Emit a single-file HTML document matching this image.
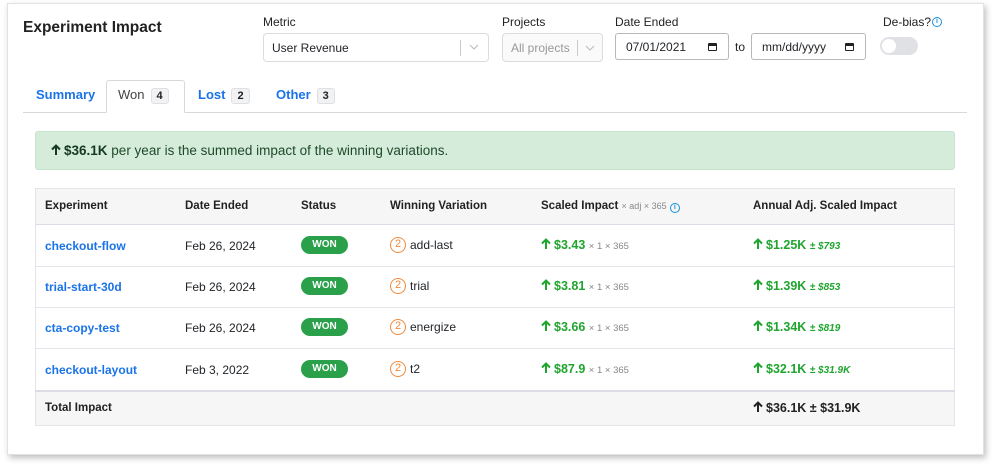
<!DOCTYPE html>
<html><head><style>
*{box-sizing:border-box;margin:0;padding:0}
body{width:1000px;height:473px;background:#fff;font-family:"Liberation Sans",sans-serif;color:#212529;position:relative;overflow:hidden}
.card{position:absolute;left:7px;top:3px;width:977px;height:452px;background:#fff;border:1px solid #e2e2e6;box-shadow:2px 3px 6px rgba(0,0,0,.25)}
.a{position:absolute;white-space:nowrap}
.lbl{font-size:12px;color:#222}
.sel{position:absolute;border:1px solid #dcdcdf;border-radius:4px;background:#fff;font-size:12px}
.inp{position:absolute;border:1px solid #b8b8bc;border-radius:3px;background:#fff;font-size:12px}
.blue{color:#1a73e8}
.badge{display:inline-block;background:#f1f2f4;border:1px solid #e0e0e4;border-radius:3px;font-size:11px;font-weight:bold;padding:1px 5px;color:#222;margin-left:6px}
.th{font-size:11.5px;font-weight:bold;color:#222}
.td{font-size:12px}
.won{position:absolute;width:47px;height:18px;background:#2aa04a;border-radius:9px;color:#fff;font-size:10px;font-weight:bold;text-align:center;line-height:18px}
.num{display:inline-block;vertical-align:middle;width:16px;height:16px;border:1.5px solid #f08a3c;border-radius:50%;color:#f08a3c;font-size:11px;text-align:center;line-height:13px;margin-right:4px;margin-top:-2px}
.g{color:#1fa52e;font-weight:bold;font-size:12.5px}
.gs{color:#888;font-size:9.5px;font-weight:normal}
.gi{color:#1fa52e;font-style:italic;font-weight:bold;font-size:10px}
.hl{position:absolute;left:35px;width:920px;height:1px;background:#e4e4ea}
svg.ar{vertical-align:-1px;margin-right:3px}
</style></head><body>
<svg width="0" height="0" style="position:absolute"><defs><symbol id="up" viewBox="0 0 10 12"><path d="M5 11V2M1 5.5L5 1.5L9 5.5" fill="none" stroke="currentColor" stroke-width="2"/></symbol></defs></svg>
<div class="card"></div>
<div class="a" style="left:23px;top:19px;font-size:15.5px;font-weight:bold;color:#222">Experiment Impact</div>

<div class="a lbl" style="left:263px;top:15px">Metric</div>
<div class="sel" style="left:263px;top:33px;width:226px;height:29px"><span class="a" style="left:8px;top:7px">User Revenue</span><span class="a" style="left:196px;top:6px;width:1px;height:16px;background:#ccc"></span><svg class="a" style="left:205px;top:10px" width="10" height="7"><path d="M1 1L5 5L9 1" fill="none" stroke="#bbb" stroke-width="1"/></svg></div>

<div class="a lbl" style="left:502px;top:15px">Projects</div>
<div class="sel" style="left:502px;top:33px;width:101px;height:29px;background:#fafafa"><span class="a" style="left:8px;top:7px;color:#999">All projects</span><span class="a" style="left:74px;top:6px;width:1px;height:16px;background:#ccc"></span><svg class="a" style="left:82px;top:11px" width="10" height="7"><path d="M1 1L5 5L9 1" fill="none" stroke="#bbb" stroke-width="1"/></svg></div>

<div class="a lbl" style="left:615px;top:15px">Date Ended</div>
<div class="inp" style="left:615px;top:33px;width:114px;height:27px"><span class="a" style="left:10px;top:6px">07/01/2021</span><span class="a" style="left:92px;top:9px;width:9px;height:8px;border:1.5px solid #222;border-top-width:3px;border-radius:1px"></span></div>
<div class="a lbl" style="left:735px;top:40px">to</div>
<div class="inp" style="left:751px;top:33px;width:115px;height:27px"><span class="a" style="left:10px;top:6px">mm/dd/yyyy</span><span class="a" style="left:93px;top:9px;width:9px;height:8px;border:1.5px solid #222;border-top-width:3px;border-radius:1px"></span></div>

<div class="a lbl" style="left:883px;top:15px">De-bias?</div>
<div class="a" style="left:932px;top:17px;width:10px;height:10px;border:1.3px solid #1a8fd8;border-radius:50%;font-size:7px;color:#1a8fd8;text-align:center;line-height:8px;font-weight:bold">i</div>
<div class="a" style="left:880px;top:37px;width:38px;height:18px;background:#dfe1e5;border-radius:9px"><div class="a" style="left:2px;top:2px;width:14px;height:14px;background:#fff;border-radius:50%"></div></div>

<div class="a" style="left:23px;top:112px;width:944px;height:1px;background:#d8d8dc"></div>
<div class="a" style="left:106px;top:80px;width:79px;height:33px;border:1px solid #d8d8dc;border-bottom:1px solid #fff;border-radius:3px 3px 0 0;background:#fff"></div>
<div class="a blue" style="left:36px;top:87px;font-size:13px;font-weight:bold">Summary</div>
<div class="a" style="left:118px;top:87px;font-size:13px;color:#444">Won<span class="badge">4</span></div>
<div class="a blue" style="left:198px;top:87px;font-size:13px;font-weight:bold">Lost<span class="badge">2</span></div>
<div class="a blue" style="left:276px;top:87px;font-size:13px;font-weight:bold">Other<span class="badge">3</span></div>

<div class="a" style="left:35px;top:131px;width:920px;height:39px;background:#d5ecdb;border:1px solid #c6e4ce;border-radius:3px"></div>
<div class="a" style="left:51px;top:143px;font-size:13.5px;color:#1f4a2a"><b style="color:#15391f"><svg class="ar" width="10" height="12" style="color:#15391f"><use href="#up"/></svg>$36.1K</b> per year is the summed impact of the winning variations.</div>

<div class="a" style="left:35px;top:188px;width:920px;height:238px;border:1px solid #e4e4ea"></div>
<div class="a" style="left:36px;top:189px;width:918px;height:36px;background:#f6f6f7;border-bottom:1.5px solid #dcdce6"></div>
<div class="a" style="left:36px;top:391px;width:918px;height:34px;background:#f6f6f7"></div>
<div class="a th" style="left:45px;top:200px">Experiment</div>
<div class="a th" style="left:185px;top:200px">Date Ended</div>
<div class="a th" style="left:301px;top:200px">Status</div>
<div class="a th" style="left:390px;top:200px">Winning Variation</div>
<div class="a th" style="left:541px;top:200px">Scaled Impact <span style="font-weight:normal;color:#888;font-size:9px">× adj × 365</span> <span style="display:inline-block;width:10px;height:10px;border:1.2px solid #1a8fd8;border-radius:50%;font-size:7px;color:#1a8fd8;text-align:center;line-height:8px">i</span></div>
<div class="a th" style="left:753px;top:200px">Annual Adj. Scaled Impact</div>

<div class="hl" style="top:266px"></div><div class="hl" style="top:307px"></div><div class="hl" style="top:348px"></div><div class="hl" style="top:390px;height:1.5px;background:#dcdce6"></div>

<div class="a td blue" style="left:45px;top:239px;font-weight:bold">checkout-flow</div>
<div class="a td" style="left:185px;top:239px">Feb 26, 2024</div>
<div class="won" style="left:301px;top:236px">WON</div>
<div class="a td" style="left:390px;top:238px"><span class="num">2</span>add-last</div>
<div class="a g" style="left:541px;top:238px"><svg class="ar" width="10" height="12"><use href="#up"/></svg>$3.43 <span class="gs">× 1 × 365</span></div>
<div class="a g" style="left:753px;top:238px"><svg class="ar" width="10" height="12"><use href="#up"/></svg>$1.25K <span class="gi">± $793</span></div>

<div class="a td blue" style="left:45px;top:280px;font-weight:bold">trial-start-30d</div>
<div class="a td" style="left:185px;top:280px">Feb 26, 2024</div>
<div class="won" style="left:301px;top:277px">WON</div>
<div class="a td" style="left:390px;top:279px"><span class="num">2</span>trial</div>
<div class="a g" style="left:541px;top:279px"><svg class="ar" width="10" height="12"><use href="#up"/></svg>$3.81 <span class="gs">× 1 × 365</span></div>
<div class="a g" style="left:753px;top:279px"><svg class="ar" width="10" height="12"><use href="#up"/></svg>$1.39K <span class="gi">± $853</span></div>

<div class="a td blue" style="left:45px;top:321px;font-weight:bold">cta-copy-test</div>
<div class="a td" style="left:185px;top:321px">Feb 26, 2024</div>
<div class="won" style="left:301px;top:318px">WON</div>
<div class="a td" style="left:390px;top:320px"><span class="num">2</span>energize</div>
<div class="a g" style="left:541px;top:320px"><svg class="ar" width="10" height="12"><use href="#up"/></svg>$3.66 <span class="gs">× 1 × 365</span></div>
<div class="a g" style="left:753px;top:320px"><svg class="ar" width="10" height="12"><use href="#up"/></svg>$1.34K <span class="gi">± $819</span></div>

<div class="a td blue" style="left:45px;top:363px;font-weight:bold">checkout-layout</div>
<div class="a td" style="left:185px;top:363px">Feb 3, 2022</div>
<div class="won" style="left:301px;top:360px">WON</div>
<div class="a td" style="left:390px;top:362px"><span class="num">2</span>t2</div>
<div class="a g" style="left:541px;top:362px"><svg class="ar" width="10" height="12"><use href="#up"/></svg>$87.9 <span class="gs">× 1 × 365</span></div>
<div class="a g" style="left:753px;top:362px"><svg class="ar" width="10" height="12"><use href="#up"/></svg>$32.1K <span class="gi">± $31.9K</span></div>

<div class="a th" style="left:45px;top:402px">Total Impact</div>
<div class="a" style="left:753px;top:401px;font-size:12.5px;font-weight:bold;color:#222"><svg class="ar" width="10" height="12"><use href="#up"/></svg>$36.1K ± $31.9K</div>
</body></html>
